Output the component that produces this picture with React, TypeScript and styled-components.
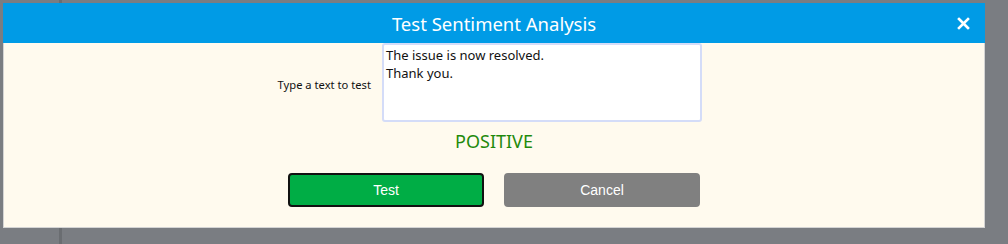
import React, { useState } from 'react';
import styled, { createGlobalStyle } from 'styled-components';

const GlobalStyle = createGlobalStyle`
  html, body {
    margin: 0;
    padding: 0;
    background: #7a7d82;
  }
  * {
    box-sizing: border-box;
  }
`;

const Backdrop = styled.div`
  width: 1008px;
  height: 244px;
  padding: 3px 0 0 3px;
  background:
    linear-gradient(to right, transparent 59px, #6a6d71 59px, #6a6d71 62px, transparent 62px),
    #7a7d82;
`;

const Dialog = styled.div`
  width: 982px;
  height: 225px;
  display: flex;
  flex-direction: column;
  background: #fffaee;
  border: 1px solid #d4d4d4;
  border-top: none;
`;

const Header = styled.div`
  position: relative;
  height: 40px;
  display: flex;
  align-items: center;
  justify-content: center;
  background: #009be6;
  margin: 0 -1px;
`;

const Title = styled.h1`
  margin: 0;
  font-family: 'Noto Sans', 'Open Sans', sans-serif;
  font-weight: 400;
  font-size: 18.5px;
  color: #ffffff;
`;

const CloseButton = styled.button`
  position: absolute;
  right: 14px;
  top: 12px;
  width: 16px;
  height: 16px;
  padding: 0;
  border: none;
  background: transparent;
  display: flex;
  align-items: center;
  justify-content: center;
  cursor: pointer;
`;

const Body = styled.div`
  display: flex;
  flex-direction: column;
  align-items: stretch;
`;

const FormRow = styled.div`
  display: grid;
  grid-template-columns: 378px 320px;
  align-items: center;
`;

const Label = styled.label`
  justify-self: end;
  padding-right: 11px;
  padding-top: 4px;
  font-family: 'Noto Sans', 'Open Sans', sans-serif;
  font-size: 11.2px;
  color: #111111;
`;

const TextArea = styled.textarea`
  width: 320px;
  height: 79px;
  margin: 0;
  padding: 1px 2px;
  resize: none;
  border: 2px solid #d4dcf8;
  border-radius: 3px;
  background: #ffffff;
  font-family: 'Noto Sans', 'Open Sans', sans-serif;
  font-size: 13px;
  line-height: 18px;
  color: #111111;
  outline: none;
`;

const Result = styled.div<{ $tone: string }>`
  margin-top: 7px;
  text-align: center;
  font-family: 'Noto Sans', 'Open Sans', sans-serif;
  font-size: 18px;
  line-height: 24px;
  color: ${({ $tone }) => $tone};
`;

const Actions = styled.div`
  display: flex;
  justify-content: center;
  gap: 20px;
  margin-top: 20px;
`;

const ActionButton = styled.button<{ $variant: 'primary' | 'secondary' }>`
  width: 196px;
  height: 34px;
  border-radius: 4px;
  font-family: 'Liberation Sans', Arial, sans-serif;
  font-size: 14px;
  color: #ffffff;
  cursor: pointer;
  background: ${({ $variant }) => ($variant === 'primary' ? '#00ad45' : '#808080')};
  border: ${({ $variant }) =>
    $variant === 'primary' ? '2px solid #111111' : '2px solid #808080'};
`;

const App: React.FC = () => {
  const [text, setText] = useState('The issue is now resolved.\nThank you.');

  return (
    <>
      <GlobalStyle />
      <Backdrop>
        <Dialog>
          <Header>
            <Title>Test Sentiment Analysis</Title>
            <CloseButton aria-label="Close">
              <svg width="13" height="13" viewBox="0 0 13 13">
                <path
                  d="M2 2 L11 11 M11 2 L2 11"
                  stroke="#ffffff"
                  strokeWidth="2.6"
                  strokeLinecap="square"
                />
              </svg>
            </CloseButton>
          </Header>
          <Body>
            <FormRow>
              <Label htmlFor="sentiment-text">Type a text to test</Label>
              <TextArea
                id="sentiment-text"
                value={text}
                onChange={(e) => setText(e.target.value)}
              />
            </FormRow>
            <Result $tone="#1f8a0c">POSITIVE</Result>
            <Actions>
              <ActionButton $variant="primary">Test</ActionButton>
              <ActionButton $variant="secondary">Cancel</ActionButton>
            </Actions>
          </Body>
        </Dialog>
      </Backdrop>
    </>
  );
};

export default App;
